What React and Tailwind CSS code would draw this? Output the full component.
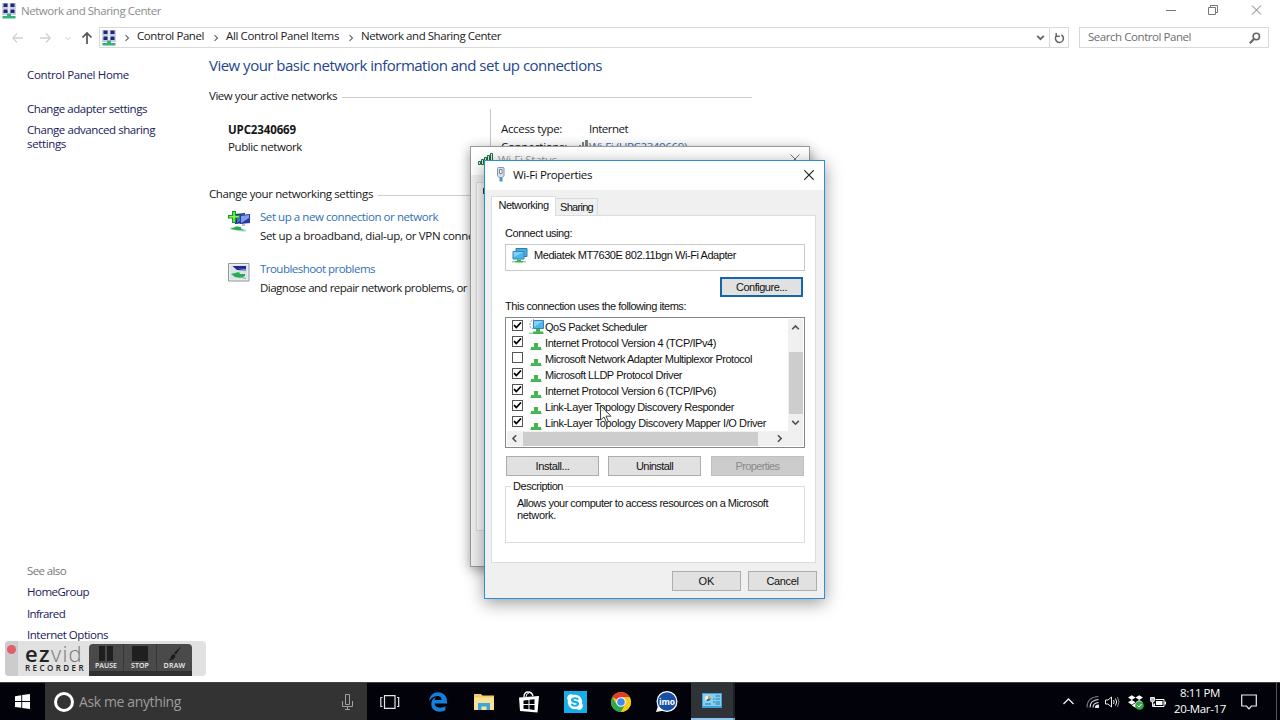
import React, { useLayoutEffect, useRef } from "react";
import { FaEdgeLegacy, FaSkype, FaDropbox } from "react-icons/fa6";

function Label({ w, className = "", children }) {
    const ref = useRef(null);

    useLayoutEffect(() => {
        const el = ref.current;
        el.style.letterSpacing = "0px";
        const natural = el.getBoundingClientRect().width;
        el.style.letterSpacing = `${(w - natural) / el.textContent.length}px`;
    }, [w]);

    return <span ref={ref} className={`inline-block whitespace-nowrap ${className}`}>{children}</span>;
}

function NetworkIcon() {
    return (
        <svg width="15" height="16" viewBox="0 0 15 16">
            <path d="M0 0h6.500v6H0zM7.500 0H14v6H7.500zM0 6.500h6.500V12H0zM7.500 6.500H14V12H7.500z" fill="#c6cfdd" />
            <path d="M1.500 .5h4v3.500h-4zM8.500 .5h4v3.500h-4zM1.500 6.500h4v3.500h-4zM8.500 6.500h4v3.500h-4z" fill="#22247e" />
            <path d="M5 10.500h4v2.500h4.500v2.500H.5V13H5z" fill="#35b277" />
        </svg>
    );
}

function SetupIcon() {
    return (
        <svg width="23" height="23" viewBox="0 0 23 23">
            <path d="M7 4l10-1v10l-10 1z" fill="#1b2a86" />
            <path d="M9 5l8-1v4l-8 5z" fill="#4f70cf" />
            <path d="M12 5l10-1v9l-10 1z" fill="#2a3aa5" />
            <path d="M13 6l8-1v3l-8 5z" fill="#7f9ee8" />
            <path d="M14 14h3v2h-3z" fill="#b9c2cc" />
            <path d="M1 18l8-2 10 4-2 2-8-1z" fill="#d3d8db" />
            <path d="M2 19l7-2.500 4 .5v2l4 1.500-9-.5z" fill="#22b14c" />
            <path d="M4 1h4v4h4v3.500H8V13H4V8.500H0V5h4z" fill="#169a20" />
            <path d="M5.200 2h1.600v4h4v1.500h-4V12H5.200V7.500h-4V6h4z" fill="#8cf06a" />
        </svg>
    );
}

function TroubleIcon() {
    return (
        <svg width="22" height="19" viewBox="0 0 22 19">
            <path d="M.5 .5h20.500v17.500H.5z" fill="#eef1f4" stroke="#8e949b" />
            <path d="M2 2h17.500v14.500H2z" fill="#dde3e8" />
            <path d="M4.500 3h13.500v4.500l-9-.5z" fill="#1c2a8c" />
            <path d="M9 5.500l9 .5v1.500z" fill="#7d97d8" />
            <path d="M3 11l8-2 1 2h5v2l-4 2-6-1z" fill="#24ad50" />
            <path d="M12 14l6 1.500" stroke="#9aa2a8" />
        </svg>
    );
}

function SignalIcon({ color }) {
    return (
        <svg width="15" height="12" viewBox="0 0 15 12">
            <path d="M.5 8.500h2v3h-2zM3.500 6.500h2v5h-2zM6.500 4.500h2v7h-2zM9.500 2.500h2v9h-2zM12.500 .5h2v11h-2z" fill="#dff0e4" stroke={color} />
        </svg>
    );
}

function AdapterIcon() {
    return (
        <svg width="16" height="15" viewBox="0 0 16 15">
            <path d="M4 .5h11v8H4z" fill="#49ade3" stroke="#2d7fb2" />
            <path d="M1 3.500h11v7.500H1z" fill="#4db5ea" stroke="#2f86bb" />
            <path d="M1.500 4h10L2 9z" fill="#7fd2f6" />
            <path d="M5 11.500h4v1.500h2v1.500H3V13h2z" fill="#39b54a" />
            <path d="M0 13h3v1.500H0zM11 13h3v1.500h-3z" fill="#b8c4ca" />
        </svg>
    );
}

function PlugIcon() {
    return (
        <svg width="10" height="15" viewBox="0 0 10 15">
            <path d="M1.500 1.500q0-1 1-1h4.500q1 0 1 1v7l-1.500 2h-3.500l-1.500-2z" fill="#d4dfeb" stroke="#8394a9" />
            <path d="M3.500 2.500h2.500v4h-2.500z" fill="#fff" stroke="#7288a2" />
            <path d="M3.500 11h3v3.500h-3z" fill="#3d9bd6" />
        </svg>
    );
}

function ProtocolIcon() {
    return (
        <svg width="14" height="9" viewBox="0 0 14 9">
            <path d="M1 6.500h12V8H1z" fill="#a9bdb0" />
            <path d="M5 1h4v4h3v3H2V5h3z" fill="#45b751" />
        </svg>
    );
}

function QosIcon() {
    return (
        <svg width="16" height="16" viewBox="0 0 16 16">
            <path d="M1.500 2.500l3-2 2 2M1 4v4l3 2" fill="none" stroke="#8c9aa6" strokeDasharray="2 1" />
            <path d="M4.500 1.500h10v8h-10z" fill="#4cb6ee" stroke="#3d83ad" />
            <path d="M5 2h9l-9 6z" fill="#82d3fa" />
            <path d="M0 13.500h15v1.500H0z" fill="#b5c2bb" />
            <path d="M7 10h4v2.500h3v2.500H4v-2.500h3z" fill="#3fb54b" />
        </svg>
    );
}

function Chevron({ d, size = 9, color = "#505050", sw = 1.6 }) {
    return (
        <svg width={size} height={size} viewBox="0 0 9 9" fill="none" stroke={color} strokeWidth={sw}>
            <path d={d} />
        </svg>
    );
}

const UP = "M1.200 6.200L4.500 2.900L7.800 6.200";
const DOWN = "M1.200 2.900L4.500 6.200L7.800 2.900";
const LEFT = "M6.200 1.200L2.900 4.500L6.200 7.800";
const RIGHT = "M2.900 1.200L6.200 4.500L2.900 7.800";

const crumbs = [
    { name: "Control Panel", w: 67 },
    { name: "All Control Panel Items", w: 113 },
    { name: "Network and Sharing Center", w: 140 },
];

const items = [
    { name: "QoS Packet Scheduler", w: 102, checked: true, qos: true },
    { name: "Internet Protocol Version 4 (TCP/IPv4)", w: 171, checked: true },
    { name: "Microsoft Network Adapter Multiplexor Protocol", w: 207, checked: false },
    { name: "Microsoft LLDP Protocol Driver", w: 137, checked: true },
    { name: "Internet Protocol Version 6 (TCP/IPv6)", w: 171, checked: true },
    { name: "Link-Layer Topology Discovery Responder", w: 189, checked: true },
    { name: "Link-Layer Topology Discovery Mapper I/O Driver", w: 221, checked: true },
];

function TitleBar() {
    return (
        <div className="flex h-[22px] items-center pl-[2px]">
            <NetworkIcon />
            <Label w={140} className="ml-[4px] -mt-px text-[11.500px] text-[#8c8c8c]">Network and Sharing Center</Label>
            <svg className="ml-auto mr-[18px] mb-[2px]" width="96" height="12" viewBox="0 0 96 12" fill="none" stroke="#777">
                <path d="M0 6.500h10M42.500 3.500h7v7h-7zM44.500 3.500v-2h7v7h-2M86 1.500l9 9M95 1.500l-9 9" />
            </svg>
        </div>
    );
}

function AddressBar() {
    return (
        <div className="flex h-[31px] items-start pt-[5px]">
            <div className="flex h-[21px] w-[99px] items-center pl-[12px]">
                <svg width="82" height="14" viewBox="0 0 82 14" fill="none">
                    <path d="M11 7H1M5 2.500L.8 7L5 11.500M28 7h10M34 2.500L38.200 7L34 11.500" stroke="#d0d0d0" strokeWidth="1.300" />
                    <path d="M53.500 6l2.500 2.500L58.500 6" stroke="#c8c8c8" />
                    <path d="M75 13V2M70.500 6.500L75 2l4.500 4.500" stroke="#555" strokeWidth="1.700" />
                </svg>
            </div>
            <div className="flex h-[21px] w-[970px] items-center border border-[#d9d9d9] pl-[2px]">
                <NetworkIcon />
                {crumbs.map((crumb) => (
                    <div key={crumb.name} className="flex items-center first-of-type:ml-px">
                        <div className="w-[19px] pl-[5px]"><Chevron d={RIGHT} size={8} color="#666" sw={1.3} /></div>
                        <Label w={crumb.w} className="mb-[3px] mr-[3px] text-[11.500px] text-[#222]">{crumb.name}</Label>
                    </div>
                ))}
                <div className="ml-auto mr-[4px]"><Chevron d={DOWN} color="#666" sw={1.8} /></div>
                <div className="flex h-[19px] w-[19px] items-center justify-center border-l border-[#d9d9d9]">
                    <svg width="11" height="12" viewBox="0 0 11 12" fill="none" stroke="#666" strokeWidth="1.500">
                        <path d="M7.500 3a4 4 0 1 1-4.700 .4M2.200 1v3.200h3.600" />
                    </svg>
                </div>
            </div>
            <div className="ml-[10px] flex h-[21px] w-[190px] items-center border border-[#d9d9d9] pl-[8px] pr-[7px]">
                <Label w={103} className="mb-px text-[11.500px] text-[#6d6d6d]">Search Control Panel</Label>
                <svg className="ml-auto" width="12" height="12" viewBox="0 0 12 12" fill="none" stroke="#666" strokeWidth="1.600">
                    <path d="M5 7L.8 11.200" strokeWidth="2" />
                    <circle cx="7.300" cy="4.500" r="3.200" />
                </svg>
            </div>
        </div>
    );
}

function Sidebar() {
    return (
        <div className="flex w-[209px] flex-col pl-[27px] text-[11.500px] leading-[14px] text-[#20205a]">
            <Label w={102} className="mt-[15px] self-start">Control Panel Home</Label>
            <Label w={120} className="mt-[20px] self-start">Change adapter settings</Label>
            <Label w={128} className="mt-[7px] self-start">Change advanced sharing</Label>
            <Label w={39} className="self-start">settings</Label>
            <Label w={39} className="mt-[413px] self-start text-[#777]">See also</Label>
            <Label w={62} className="mt-[7px] self-start">HomeGroup</Label>
            <Label w={38} className="mt-[8px] self-start">Infrared</Label>
            <Label w={81} className="mt-[7px] self-start">Internet Options</Label>
        </div>
    );
}

function MainPanel() {
    return (
        <div className="flex w-[543px] flex-col text-[11.500px] leading-[14px] text-[#161616]">
            <Label w={393} className="mt-[2px] self-start text-[15px] leading-[20px] text-[#24458c]">
                View your basic network information and set up connections
            </Label>
            <div className="mt-[14px] flex items-center">
                <Label w={128}>View your active networks</Label>
                <div className="ml-[5px] mt-[2px] h-px grow bg-[#cfcfcf]" />
            </div>
            <div className="mt-[6px] flex h-[72px]">
                <div className="flex w-[281px] flex-col pl-[19px] pt-[14px]">
                    <Label w={68} className="self-start font-bold">UPC2340669</Label>
                    <Label w={74} className="mt-[3px] self-start">Public network</Label>
                </div>
                <div className="grid grid-cols-[77px_11px_1fr] content-start gap-y-[4px] border-l border-[#c4c4c4] pl-[10px] pt-[13px]">
                    <Label w={61} className="justify-self-start">Access type:</Label>
                    <span />
                    <Label w={39} className="justify-self-start">Internet</Label>
                    <Label w={66} className="justify-self-start">Connections:</Label>
                    <svg width="10" height="11" viewBox="0 0 10 11">
                        <path d="M1 5h2v6H1zM4 2h2v9H4zM7 0h3v11H7z" fill="#7b8580" />
                    </svg>
                    <Label w={98} className="justify-self-start text-[#3a6cb0]">Wi-Fi (UPC2340669)</Label>
                </div>
            </div>
            <div className="mt-[6px] flex items-center">
                <Label w={164}>Change your networking settings</Label>
                <div className="ml-[5px] mt-[2px] h-px grow bg-[#cfcfcf]" />
            </div>
            <div className="mt-[9px] flex h-[52px] pl-[19px]">
                <div className="w-[32px]"><SetupIcon /></div>
                <div className="flex flex-col">
                    <Label w={178} className="self-start text-[#3070b8]">Set up a new connection or network</Label>
                    <Label w={239} className="mt-[5px] self-start">Set up a broadband, dial-up, or VPN connection</Label>
                </div>
            </div>
            <div className="flex pl-[19px]">
                <div className="w-[32px] pt-px"><TroubleIcon /></div>
                <div className="flex flex-col">
                    <Label w={115} className="self-start text-[#3070b8]">Troubleshoot problems</Label>
                    <Label w={207} className="mt-[5px] self-start">Diagnose and repair network problems, or</Label>
                </div>
            </div>
        </div>
    );
}

function StatusWindow() {
    return (
        <div className="absolute left-[470px] top-[146px] flex h-[421px] w-[340px] flex-col border border-[#9a9a9a] bg-[#f0f0f0] shadow-[0_3px_12px_rgba(0,0,0,0.4)]">
            <div className="flex h-[28px] items-start bg-white pl-[7px] pr-[9px] pt-[6px]">
                <SignalIcon color="#1b6b3c" />
                <Label w={59} className="ml-[5px] text-[11.500px] leading-[14px] text-[#999]">Wi-Fi Status</Label>
                <svg className="ml-auto mt-px" width="10" height="10" viewBox="0 0 10 10" stroke="#777">
                    <path d="M.5 .5l9 9M9.500 .5l-9 9" />
                </svg>
            </div>
            <div className="mx-[5px] mt-[7px] h-[349px] border border-[#dcdcdc] bg-[#fbfbfb]">
                <div className="ml-[6px] mt-[5px] h-[6px] w-[4px] bg-[#1c3f66]" />
            </div>
        </div>
    );
}

function Button({ w, text, className = "", disabled = false }) {
    const colors = disabled ? "border-[#bfbfbf] bg-[#cccccc] text-[#8a8a8a]" : "border-[#adadad] bg-[#e1e1e1]";
    return (
        <button disabled={disabled} className={`flex h-[20px] items-center justify-center border ${colors} ${className}`}>
            <Label w={w}>{text}</Label>
        </button>
    );
}

function ItemList() {
    return (
        <div className="mt-[4px] flex h-[131px] w-[300px] flex-col border border-[#828790] bg-white p-px">
            <div className="flex h-[112px]">
                <div className="w-[281px]">
                    {items.map((item) => (
                        <div key={item.name} className="flex h-[16px] items-start pl-[5px]">
                            <div className="mt-px h-[11px] w-[11px] border border-[#555]">
                                {item.checked && (
                                    <svg width="9" height="9" viewBox="0 0 9 9" fill="none" stroke="#000" strokeWidth="1.800">
                                        <path d="M1 4.200l2.300 2.300L8 1.500" />
                                    </svg>
                                )}
                            </div>
                            <div className="flex h-[16px] w-[22px] items-end pl-[6px]">
                                {item.qos ? <QosIcon /> : <ProtocolIcon />}
                            </div>
                            <Label w={item.w} className="leading-[16px]">{item.name}</Label>
                        </div>
                    ))}
                </div>
                <div className="flex w-[15px] flex-col items-center bg-[#f0f0f0]">
                    <div className="flex h-[33px] items-start pt-[4px]"><Chevron d={UP} /></div>
                    <div className="h-[62px] w-[14px] bg-[#cdcdcd]" />
                    <div className="pt-[4px]"><Chevron d={DOWN} /></div>
                </div>
            </div>
            <div className="flex grow items-center bg-[#f0f0f0]">
                <div className="w-[16px] pl-[3px]"><Chevron d={LEFT} /></div>
                <div className="h-[14px] w-[235px] bg-[#cdcdcd]" />
                <div className="pl-[17px]"><Chevron d={RIGHT} /></div>
            </div>
        </div>
    );
}

function PropertiesWindow() {
    return (
        <div className="absolute left-[484px] top-[160px] flex h-[439px] w-[341px] flex-col border border-[#2b90cf] bg-[#f0f0f0] font-['Liberation_Sans',sans-serif] text-[11px] leading-[13px] text-[#111] shadow-[0_4px_16px_rgba(0,0,0,0.4)]">
            <div className="flex h-[29px] items-center bg-white pb-[2px] pl-[11px] pr-[10px]">
                <PlugIcon />
                <Label w={79} className="-mt-px ml-[7px] font-['Open_Sans',sans-serif] text-[11.500px]">Wi-Fi Properties</Label>
                <svg className="ml-auto" width="10" height="10" viewBox="0 0 10 10" stroke="#222" strokeWidth="1.200">
                    <path d="M.3 .3l9.400 9.400M9.700 .3l-9.400 9.400" />
                </svg>
            </div>
            <div className="flex items-end pl-[6px] pt-[6px]">
                <div className="relative z-10 -mb-px flex h-[20px] w-[65px] justify-center border border-b-0 border-[#dcdcdc] bg-white pt-[2px]">
                    <Label w={50}>Networking</Label>
                </div>
                <div className="flex h-[17px] w-[42px] justify-center border border-b-0 border-l-0 border-[#d5dbe0] bg-[#f0f0f0] pt-[2px]">
                    <Label w={33}>Sharing</Label>
                </div>
            </div>
            <div className="ml-[6px] flex h-[348px] w-[325px] flex-col border border-[#dcdcdc] bg-white pl-[13px]">
                <Label w={67} className="mt-[11px] self-start">Connect using:</Label>
                <div className="mt-[4px] flex h-[27px] w-[300px] items-start border border-[#c8c8c8] pl-[6px] pt-[3px]">
                    <AdapterIcon />
                    <Label w={202} className="ml-[6px] mt-px">Mediatek MT7630E 802.11bgn Wi-Fi Adapter</Label>
                </div>
                <button className="ml-[215px] mt-[6px] flex h-[20px] w-[83px] items-center justify-center border-2 border-[#1167a8] bg-[#e1e1e1]">
                    <Label w={51}>Configure...</Label>
                </button>
                <Label w={181} className="mt-[3px] self-start">This connection uses the following items:</Label>
                <ItemList />
                <div className="ml-px mt-[8px] flex gap-[9px]">
                    <Button w={34} text="Install..." className="w-[93px]" />
                    <Button w={37} text="Uninstall" className="w-[93px]" />
                    <Button w={44} text="Properties" disabled className="ml-px w-[93px]" />
                </div>
                <fieldset className="mt-[4px] h-[63px] w-[300px] border border-[#dcdcdc] pl-[11px]">
                    <legend className="-ml-[6px] h-[13px] px-[2px]"><Label w={50}>Description</Label></legend>
                    <div className="flex flex-col items-start pt-[4px] leading-[12px]">
                        <Label w={251}>Allows your computer to access resources on a Microsoft</Label>
                        <Label w={39}>network.</Label>
                    </div>
                </fieldset>
            </div>
            <div className="mt-[8px] flex justify-end gap-[7px] pr-[7px]">
                <Button w={16} text="OK" className="w-[69px]" />
                <Button w={32} text="Cancel" className="w-[69px]" />
            </div>
        </div>
    );
}

function Recorder() {
    return (
        <div className="absolute left-[5px] top-[641px] flex h-[35px] w-[201px] rounded-[4px] bg-[#e1e1e1]">
            <div className="w-[13px] rounded-l-[4px] bg-[#cccccc] pl-[2px] pt-[4px]">
                <div className="h-[9px] w-[9px] rounded-full bg-[#e0606a]" />
            </div>
            <div className="flex w-[71px] flex-col pl-[7px] pt-[2px] text-[#222]">
                <div className="flex h-[20px] items-start text-[22px] leading-[20px]">
                    <Label w={26} className="font-semibold">ez</Label>
                    <Label w={32} className="font-light text-[#777]">vid</Label>
                </div>
                <Label w={61} className="self-start text-[8px] font-semibold leading-[9px]">RECORDER</Label>
            </div>
            <div className="mt-[3px] flex h-[32px] w-[103px] rounded-t-[4px] border-b-[5px] border-[#303030] bg-[#4a4a4a] text-[7px] font-semibold leading-[8px] text-[#eee]">
                <div className="flex w-[34px] flex-col items-center pt-[2px]">
                    <svg width="14" height="15" viewBox="0 0 14 15"><path d="M0 0h6v15H0zM8 0h6v15H8z" fill="#1f1f1f" /></svg>
                    <Label w={22} className="mt-px">PAUSE</Label>
                </div>
                <div className="flex w-[34px] flex-col items-center border-x border-[#383838] pt-[2px]">
                    <svg width="16" height="15" viewBox="0 0 16 15"><path d="M0 0h16v15H0z" fill="#1f1f1f" /></svg>
                    <Label w={18} className="mt-px">STOP</Label>
                </div>
                <div className="flex w-[35px] flex-col items-center pt-[2px]">
                    <svg width="15" height="15" viewBox="0 0 15 15">
                        <path d="M14.500 0L9 8.500 7 7zM6.500 8l2 1.500q-1 5-7.500 5 3-1.500 3-4 .5-2 2.500-2.500z" fill="#1b1b1b" />
                    </svg>
                    <Label w={22} className="mt-px">DRAW</Label>
                </div>
            </div>
        </div>
    );
}

function ChromeIcon() {
    return (
        <svg width="20" height="20" viewBox="0 0 20 20">
            <circle cx="10" cy="10" r="10" fill="#fbc916" />
            <path d="M10 10L1.340 5A10 10 0 0 1 18.660 5z" fill="#e33b2e" />
            <path d="M1.340 5A10 10 0 0 0 10 20L14.300 12.500 10 10 5.700 12.500z" fill="#2da94f" />
            <path d="M10 5h8.660A10 10 0 0 1 10 20l4.300-7.500z" fill="#fbc916" />
            <circle cx="10" cy="10" r="4.800" fill="#fff" />
            <circle cx="10" cy="10" r="3.800" fill="#4688f1" />
        </svg>
    );
}

function Taskbar() {
    return (
        <div className="flex h-[38px] items-stretch border-t border-[#444] bg-[#02030a]">
            <div className="flex w-[45px] items-center pl-[15px]">
                <svg width="15" height="15" viewBox="0 0 15 15" fill="#fff">
                    <path d="M0 2.200L6.300 1.200V7H0zM7.200 1L15 0v7H7.200zM0 8h6.300v5.800L0 12.900zM7.200 8H15v7l-7.800-1z" />
                </svg>
            </div>
            <div className="flex w-[322px] items-center bg-[#333333] pl-[9px] pr-[14px]">
                <div className="h-[20px] w-[20px] rounded-full border-[3px] border-white" />
                <Label w={102} className="ml-[5px] text-[14px] text-[#9c9c9c]">Ask me anything</Label>
                <svg className="ml-auto" width="11" height="16" viewBox="0 0 11 16" fill="none" stroke="#a0a0a0">
                    <path d="M3.500 .5h4v10h-4zM.5 7v5.500h10V7M5.500 12.500v3M3 15.500h5" />
                </svg>
            </div>
            <div className="flex w-[46px] items-center justify-center">
                <svg width="20" height="14" viewBox="0 0 20 14" fill="none" stroke="#e5e5e5" strokeWidth="1.200">
                    <path d="M4.500 .7h10.500v12.600H4.500zM2.500 2.500H.8v9h1.700M17 2.500h1.700v9H17" />
                </svg>
            </div>
            <div className="flex w-[50px] items-center justify-center">
                <FaEdgeLegacy size={20} color="#1280dc" />
            </div>
            <div className="flex w-[42px] items-center justify-center pr-px">
                <svg width="20" height="18" viewBox="0 0 20 18">
                    <path d="M0 1h7l1.500 1.500H20V17H0z" fill="#f0cd68" />
                    <path d="M0 4.500h20V17H0z" fill="#fbe197" />
                    <path d="M4 10h12v7h-3.500v-3.500h-5V17H4z" fill="#3ba7d8" />
                </svg>
            </div>
            <div className="flex w-[48px] items-center justify-center">
                <svg width="20" height="22" viewBox="0 0 20 22">
                    <path d="M5 6Q5 1 9 1t5 4" fill="none" stroke="#fff" strokeWidth="1.300" />
                    <path d="M7 6q0-3.500 3-4" fill="none" stroke="#fff" />
                    <path d="M0 6.500L20 5l-1.500 16.500L1 20z" fill="#fff" />
                    <path d="M4.500 9.500l5-.6v4.200h-5zM10.500 8.800l5-.6v4.900h-5zM4.500 14h5v4.200l-5-.5zM10.500 14h5v4.900l-5-.6z" fill="#02030a" />
                </svg>
            </div>
            <div className="flex w-[44px] items-center justify-center">
                <div className="flex h-[22px] w-[23px] items-center justify-center bg-[#14aee8]">
                    <FaSkype size={18} color="#fff" />
                </div>
            </div>
            <div className="flex w-[48px] items-center justify-center"><ChromeIcon /></div>
            <div className="flex w-[46px] items-center justify-center pr-[3px]">
                <svg width="23" height="22" viewBox="0 0 23 22">
                    <path d="M1 21l2-6 6 4.500z" fill="#fff" />
                    <circle cx="12" cy="10.500" r="10.500" fill="#fff" />
                    <circle cx="12" cy="10.500" r="9.300" fill="#1650a5" />
                    <text x="12" y="13.500" textAnchor="middle" fill="#fff" fontSize="8.500" fontWeight="700" fontFamily="Open Sans, sans-serif">imo</text>
                </svg>
            </div>
            <div className="flex w-[42px] items-center justify-center border-b-2 border-[#8fc4ee] bg-[#2f3338]">
                <svg width="20" height="15" viewBox="0 0 20 15">
                    <path d="M0 0h20v15H0z" fill="#3f9fd2" />
                    <path d="M1 1h18v12H1z" fill="#84d0f2" />
                    <circle cx="6" cy="5.500" r="3" fill="#f5f0d0" />
                    <path d="M6 5.500V2.500a3 3 0 0 1 3 3z" fill="#e8a33d" />
                    <path d="M6 5.500l3 0a3 3 0 0 1-5 2z" fill="#2b6da8" />
                    <path d="M3 11h6M11 9h2M13.500 3H18M13.500 6H18M13.500 9H18M11 6h1.500M13.500 11H18" stroke="#2678ae" />
                </svg>
            </div>
            <div className="w-[2px] border-b-2 border-[#6f9cc0] bg-[#1c2024]" />
            <div className="ml-auto flex items-center text-white">
                <svg width="11" height="7" viewBox="0 0 11 7" fill="none" stroke="#eee" strokeWidth="1.300"><path d="M.5 6L5.500 1l5 5" /></svg>
                <svg className="ml-[12px]" width="13" height="13" viewBox="0 0 13 13" fill="none" stroke="#ddd" strokeWidth="1.100">
                    <path d="M1 12.500Q1 2 12.500 1.500" stroke="#777" />
                    <path d="M4 12.500Q4 5 12.500 4.500M7 12.500Q7 8 12.500 7.500" />
                    <path d="M9.500 12.500q0-2.500 3-2.500v2.500z" fill="#fff" />
                </svg>
                <svg className="ml-[6px]" width="15" height="12" viewBox="0 0 15 12" fill="none" stroke="#eee">
                    <path d="M.5 4H3l3.500-3v10L3 8H.5zM8.500 4q1.300 2 0 4M10.500 2.500q2.300 3.500 0 7" />
                    <path d="M12.500 1q3 5 0 10" stroke="#888" />
                </svg>
                <div className="relative ml-[8px] h-[15px] w-[15px]">
                    <FaDropbox size={15} color="#fff" />
                    <svg className="absolute -bottom-px -right-px" width="9" height="9" viewBox="0 0 9 9">
                        <circle cx="4.500" cy="4.500" r="4.300" fill="#35a847" />
                        <path d="M2.500 4.500L4 6l2.500-3" fill="none" stroke="#fff" />
                    </svg>
                </div>
                <svg className="ml-[7px]" width="16" height="12" viewBox="0 0 16 12">
                    <path d="M5.500 3.500h8.500v7H4.500v-3" fill="none" stroke="#fff" />
                    <path d="M14.500 5.500H16v3h-1.500zM6 5h6.500v4H6z" fill="#fff" />
                    <path d="M.5 1.500h4v3q0 1.500-2 1.500T.5 4.500zM2.500 6v4.500H5" fill="#bbb" stroke="#eee" />
                </svg>
                <div className="ml-[8px] flex w-[52px] flex-col items-center pb-px text-[11.500px] leading-[16px]">
                    <Label w={40}>8:11 PM</Label>
                    <Label w={52}>20-Mar-17</Label>
                </div>
                <svg className="ml-[15px]" width="16" height="16" viewBox="0 0 16 16" fill="none" stroke="#eee" strokeWidth="1.200">
                    <path d="M.7 1h14.600v11h-4.800L8 14.800 5.500 12H.7z" />
                </svg>
                <div className="ml-[19px] h-[37px] w-[4px] border-l border-[#555]" />
            </div>
        </div>
    );
}

function App() {
    return (
        <div className="relative flex h-[720px] w-[1280px] flex-col overflow-hidden bg-white font-['Open_Sans',sans-serif]">
            <TitleBar />
            <AddressBar />
            <div className="flex min-h-0 grow">
                <Sidebar />
                <MainPanel />
            </div>
            <StatusWindow />
            <PropertiesWindow />
            <svg className="absolute left-[600px] top-[405px]" width="13" height="19" viewBox="0 0 13 19">
                <path d="M.5 .5v14.500l3.500-3 2.500 5.500 2-1-2.500-5.300h5z" fill="#fff" fillOpacity=".75" stroke="#444" />
            </svg>
            <Recorder />
            <Taskbar />
        </div>
    );
}

export default App;
